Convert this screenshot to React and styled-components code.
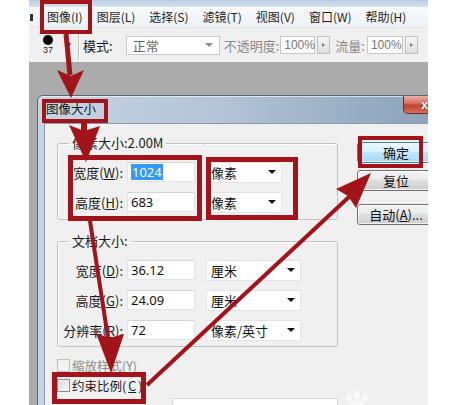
import React from 'react';
import styled, { createGlobalStyle } from 'styled-components';

const GlobalStyle = createGlobalStyle`
  html, body {
    margin: 0;
    padding: 0;
    background: #fff;
  }
  body {
    font-family: "Noto Sans CJK SC", "Noto Sans", sans-serif;
  }
`;

const RED = '#a3131a';

const Page = styled.div`
  position: relative;
  width: 466px;
  height: 405px;
  overflow: hidden;
  background: #fff;
`;

const Shot = styled.div`
  margin-left: 29px;
  width: 399px;
  height: 405px;
  overflow: hidden;
  display: flex;
  flex-direction: column;
  font-size: 13px;
  color: #1a1a1a;
`;

const TopStrip = styled.div`
  height: 7px;
  flex-shrink: 0;
  background: linear-gradient(#b9cde3, #d4e1ef);
`;

const MenuBar = styled.div`
  height: 20px;
  flex-shrink: 0;
  display: flex;
  align-items: center;
  gap: 14px;
  padding-left: 1px;
  background: linear-gradient(#f8fafc, #eef2f6);
  font-size: 12px;
  line-height: 20px;
`;

const MenuStub = styled.span`
  width: 3px;
  height: 7px;
  background: #333;
`;

const MenuItem = styled.span`
  color: #1e1e1e;
  white-space: nowrap;
`;

const ToolBar = styled.div`
  height: 35px;
  flex-shrink: 0;
  display: flex;
  align-items: center;
  background: #f0f0f0;
  border-top: 1px solid #e2e4e7;
  box-sizing: border-box;
`;

const BrushPreview = styled.div`
  margin-left: 11px;
  width: 16px;
  display: flex;
  flex-direction: column;
  align-items: center;
`;

const BrushDot = styled.span`
  width: 10px;
  height: 10px;
  border-radius: 50%;
  background: #000;
`;

const BrushSize = styled.span`
  font-family: "Liberation Sans", sans-serif;
  font-size: 9px;
  line-height: 11px;
  color: #222;
`;

const SmallCaret = styled.span`
  margin-left: 11px;
  width: 0;
  height: 0;
  border-left: 2px solid transparent;
  border-right: 2px solid transparent;
  border-top: 4px solid #333;
`;

const ToolSep = styled.span`
  margin-left: 7px;
  width: 1px;
  height: 30px;
  background: #c4c4c4;
  border-right: 1px solid #fff;
`;

const ToolLabel = styled.span`
  margin-left: ${(p) => p.$gap}px;
  color: ${(p) => (p.$muted ? '#8a8a8a' : '#1a1a1a')};
  white-space: nowrap;
`;

const ModeSelect = styled.div`
  margin-left: 13px;
  width: 94px;
  height: 19px;
  box-sizing: border-box;
  display: flex;
  align-items: center;
  justify-content: space-between;
  padding: 0 6px 0 6px;
  background: #fff;
  border: 1px solid #c8c8c8;
  color: #666;
  font-size: 13px;
`;

const GrayArrow = styled.span`
  width: 0;
  height: 0;
  border-left: 4px solid transparent;
  border-right: 4px solid transparent;
  border-top: 4px solid #8d8d8d;
`;

const PercentBox = styled.div`
  margin-left: ${(p) => p.$gap}px;
  width: ${(p) => p.$w}px;
  height: 18px;
  box-sizing: border-box;
  display: flex;
  align-items: center;
  padding-left: 3px;
  background: #fff;
  border: 1px solid #c8c8c8;
  color: #777;
  font-family: "Liberation Sans", sans-serif;
  font-size: 12px;
`;

const Stepper = styled.span`
  margin-left: 2px;
  width: 13px;
  height: 18px;
  box-sizing: border-box;
  display: flex;
  align-items: center;
  justify-content: center;
  background: linear-gradient(#f7f7f7, #dedede);
  border: 1px solid #c2c2c2;

  &::after {
    content: '';
    border-top: 2px solid transparent;
    border-bottom: 2px solid transparent;
    border-left: 3px solid #7a7a7a;
  }
`;

const Workspace = styled.div`
  flex: 1;
  display: flex;
  align-items: flex-start;
  padding: 33px 0 0 8px;
  background: #ababab;
  min-height: 0;
`;

const Dialog = styled.div`
  flex-shrink: 0;
  width: 410px;
  height: 320px;
  box-sizing: border-box;
  display: flex;
  flex-direction: column;
  border: 1px solid #56667a;
  border-radius: 6px 6px 0 0;
  background: linear-gradient(to right, #c6d5e4, #b3c4d6 45%, #97acc2 80%, #8aa1b9);
  box-shadow: inset 0 1px 0 rgba(255, 255, 255, 0.6);
`;

const TitleBar = styled.div`
  height: 27px;
  flex-shrink: 0;
  display: flex;
  align-items: flex-start;
  padding-left: 8px;
`;

const TitleText = styled.span`
  margin-top: 5px;
  font-size: 12.5px;
  line-height: 16px;
  color: #111;
`;

const CloseButton = styled.span`
  margin-left: auto;
  width: 43px;
  height: 18px;
  box-sizing: border-box;
  display: flex;
  align-items: center;
  justify-content: center;
  border: 1px solid #6b2a24;
  border-top: none;
  border-radius: 0 0 5px 5px;
  background: linear-gradient(#eab1a6, #d46a5b 45%, #c2402f 55%, #d7705e);
  color: #fff;
  font-family: "Liberation Sans", sans-serif;
  font-weight: bold;
  font-size: 13px;
  text-shadow: 0 0 2px #6a1d14;
`;

const Body = styled.div`
  flex: 1;
  display: flex;
  margin: 0 6px;
  padding: 11px 0 0 12px;
  background: #f0f0f0;
  border: 1px solid #8b9bad;
  border-bottom: none;
`;

const LeftCol = styled.div`
  width: 281px;
  flex-shrink: 0;
  display: flex;
  flex-direction: column;
`;

const Group = styled.fieldset`
  margin: ${(p) => p.$top}px 0 0 0;
  padding: 11px 0 ${(p) => p.$bottom}px 0;
  border: 1px solid #c3c3c3;
  border-radius: 3px;
  box-shadow: inset 1px 1px 0 #fff;
  display: flex;
  flex-direction: column;
  gap: 10px;
`;

const Legend = styled.legend`
  margin-left: 11px;
  padding: 0 3px;
  font-size: 13px;
  line-height: 16px;
  color: #1a1a1a;
`;

const FieldRow = styled.div`
  display: flex;
  align-items: center;
  height: 20px;
`;

const FieldLabel = styled.span`
  width: 65px;
  text-align: right;
  white-space: nowrap;
  font-size: 13px;
`;

const TextBox = styled.div`
  margin-left: 4px;
  width: 68px;
  height: 20px;
  box-sizing: border-box;
  display: flex;
  align-items: center;
  padding-left: 3px;
  background: #fff;
  border: 1px solid #e1e4e8;
  border-top-color: #d2d6db;
  font-family: "Noto Sans", sans-serif;
  font-size: 13px;
  color: #111;
`;

const Selected = styled.span`
  background: #3399ff;
  color: #fff;
  padding: 0 1px;
  line-height: 16px;
`;

const Dropdown = styled.div`
  margin-left: 11px;
  width: ${(p) => p.$w}px;
  height: 21px;
  box-sizing: border-box;
  display: flex;
  align-items: center;
  justify-content: space-between;
  padding: 0 5px 0 4px;
  background: #fff;
  border: 1px solid #e4e4e4;
  font-size: 13px;
  color: #111;
  white-space: nowrap;
`;

const BlackArrow = styled.span`
  width: 0;
  height: 0;
  border-left: 4px solid transparent;
  border-right: 4px solid transparent;
  border-top: 4px solid #111;
`;

const CheckRow = styled.label`
  margin-top: ${(p) => p.$top}px;
  display: flex;
  align-items: center;
  gap: 2px;
  height: 16px;
  font-size: 12.5px;
  color: ${(p) => (p.$disabled ? '#8e8e8e' : '#1a1a1a')};
  white-space: nowrap;
`;

const CheckBox = styled.span`
  width: 13px;
  height: 13px;
  box-sizing: border-box;
  border: 1px solid ${(p) => (p.$disabled ? '#c2c2c2' : '#8f8f8f')};
  background: ${(p) =>
    p.$disabled
      ? '#f4f4f4'
      : 'linear-gradient(135deg, #dcdcdc, #f7f7f7)'};
  box-shadow: inset 0 0 0 1px ${(p) => (p.$disabled ? '#f0f0f0' : '#f3f3f3')};
`;

const ResampleRow = styled.div`
  margin-top: 5px;
  padding-left: 115px;
  display: flex;
`;

const ResampleBox = styled.div`
  width: 168px;
  height: 20px;
  box-sizing: border-box;
  background: #fff;
  border: 1px solid #d8d8d8;
`;

const RightCol = styled.div`
  margin-left: 19px;
  padding-top: 7px;
  display: flex;
  flex-direction: column;
`;

const Button = styled.div`
  margin-top: ${(p) => p.$top}px;
  width: 78px;
  height: 21px;
  box-sizing: border-box;
  display: flex;
  align-items: center;
  justify-content: center;
  border: 1px solid ${(p) => (p.$primary ? '#3c7fb1' : '#707070')};
  border-radius: 3px;
  background: ${(p) =>
    p.$primary
      ? 'linear-gradient(#eaf6fd, #d9f0fc 50%, #bee6fd 50%, #a7d9f5)'
      : 'linear-gradient(#f2f2f2, #ebebeb 50%, #dddddd 50%, #cfcfcf)'};
  box-shadow: inset 0 0 0 1px rgba(255, 255, 255, 0.7);
  font-size: 13px;
  color: #111;
  white-space: nowrap;
`;

const Overlay = styled.svg`
  position: absolute;
  left: 0;
  top: 0;
  pointer-events: none;
`;

function Markup() {
  return (
    <Overlay width="466" height="405" viewBox="0 0 466 405">
      <g fill="#fafafa" opacity="0.9">
        <ellipse cx="349" cy="398" rx="3" ry="4" />
        <ellipse cx="357" cy="395" rx="3" ry="4" />
        <ellipse cx="365" cy="398" rx="3" ry="4" />
        <ellipse cx="357" cy="405" rx="7" ry="5" />
      </g>
      <g fill="none" stroke={RED} strokeLinejoin="miter">
        <rect x="42" y="2" width="48" height="30" strokeWidth="4" />
        <rect x="44" y="101" width="62" height="20" strokeWidth="4" />
        <rect x="70.5" y="157.5" width="129" height="61" strokeWidth="5" />
        <rect x="208.5" y="159.5" width="87" height="58" strokeWidth="5" />
        <rect x="360" y="138" width="61" height="28" strokeWidth="4" />
        <rect x="54.5" y="374.5" width="89" height="27" strokeWidth="5" />
        <line x1="66" y1="34" x2="70" y2="75" strokeWidth="5" />
        <line x1="84" y1="123" x2="84" y2="132" strokeWidth="6" />
        <line x1="90" y1="221" x2="108" y2="338" strokeWidth="4" />
        <line x1="147" y1="385" x2="350" y2="196" strokeWidth="4" />
      </g>
      <g fill={RED}>
        <polygon points="57,70 71,76 84,70 71,98" />
        <polygon points="69,125 84,131 100,126 86,162" />
        <polygon points="96,333 109,338 124,334 111,373" />
        <polygon points="336,189 348,196 356,208 371,173" />
      </g>
    </Overlay>
  );
}

export default function App() {
  return (
    <Page>
      <GlobalStyle />
      <Shot>
        <TopStrip />
        <MenuBar>
          <MenuStub />
          <MenuItem>图像(I)</MenuItem>
          <MenuItem>图层(L)</MenuItem>
          <MenuItem>选择(S)</MenuItem>
          <MenuItem>滤镜(T)</MenuItem>
          <MenuItem>视图(V)</MenuItem>
          <MenuItem>窗口(W)</MenuItem>
          <MenuItem>帮助(H)</MenuItem>
        </MenuBar>
        <ToolBar>
          <BrushPreview>
            <BrushDot />
            <BrushSize>37</BrushSize>
          </BrushPreview>
          <SmallCaret />
          <ToolSep />
          <ToolLabel $gap={3}>模式:</ToolLabel>
          <ModeSelect>
            正常
            <GrayArrow />
          </ModeSelect>
          <ToolLabel $gap={4} $muted>
            不透明度:
          </ToolLabel>
          <PercentBox $gap={1} $w={35}>100%</PercentBox>
          <Stepper />
          <ToolLabel $gap={5} $muted>
            流量:
          </ToolLabel>
          <PercentBox $gap={2} $w={36}>100%</PercentBox>
          <Stepper />
        </ToolBar>
        <Workspace>
          <Dialog>
            <TitleBar>
              <TitleText>图像大小</TitleText>
              <CloseButton>x</CloseButton>
            </TitleBar>
            <Body>
              <LeftCol>
                <Group $top={0} $bottom={7}>
                  <Legend>像素大小:2.00M</Legend>
                  <FieldRow>
                    <FieldLabel>
                      宽度(<u>W</u>):
                    </FieldLabel>
                    <TextBox>
                      <Selected>1024</Selected>
                    </TextBox>
                    <Dropdown $w={76}>
                      像素
                      <BlackArrow />
                    </Dropdown>
                  </FieldRow>
                  <FieldRow>
                    <FieldLabel>
                      高度(<u>H</u>):
                    </FieldLabel>
                    <TextBox>683</TextBox>
                    <Dropdown $w={76}>
                      像素
                      <BlackArrow />
                    </Dropdown>
                  </FieldRow>
                </Group>
                <Group $top={13} $bottom={6}>
                  <Legend>文档大小:</Legend>
                  <FieldRow>
                    <FieldLabel>
                      宽度(<u>D</u>):
                    </FieldLabel>
                    <TextBox>36.12</TextBox>
                    <Dropdown $w={95}>
                      厘米
                      <BlackArrow />
                    </Dropdown>
                  </FieldRow>
                  <FieldRow>
                    <FieldLabel>
                      高度(<u>G</u>):
                    </FieldLabel>
                    <TextBox>24.09</TextBox>
                    <Dropdown $w={95}>
                      厘米
                      <BlackArrow />
                    </Dropdown>
                  </FieldRow>
                  <FieldRow>
                    <FieldLabel>
                      分辨率(<u>R</u>):
                    </FieldLabel>
                    <TextBox>72</TextBox>
                    <Dropdown $w={95}>
                      像素/英寸
                      <BlackArrow />
                    </Dropdown>
                  </FieldRow>
                </Group>
                <CheckRow $top={10} $disabled>
                  <CheckBox $disabled />
                  缩放样式(Y)
                </CheckRow>
                <CheckRow $top={4}>
                  <CheckBox />
                  约束比例(<u>C</u>)
                </CheckRow>
                <ResampleRow>
                  <ResampleBox />
                </ResampleRow>
              </LeftCol>
              <RightCol>
                <Button $primary $top={0}>
                  确定
                </Button>
                <Button $top={7}>复位</Button>
                <Button $top={13}>
                  自动(<u>A</u>)...
                </Button>
              </RightCol>
            </Body>
          </Dialog>
        </Workspace>
      </Shot>
      <Markup />
    </Page>
  );
}
